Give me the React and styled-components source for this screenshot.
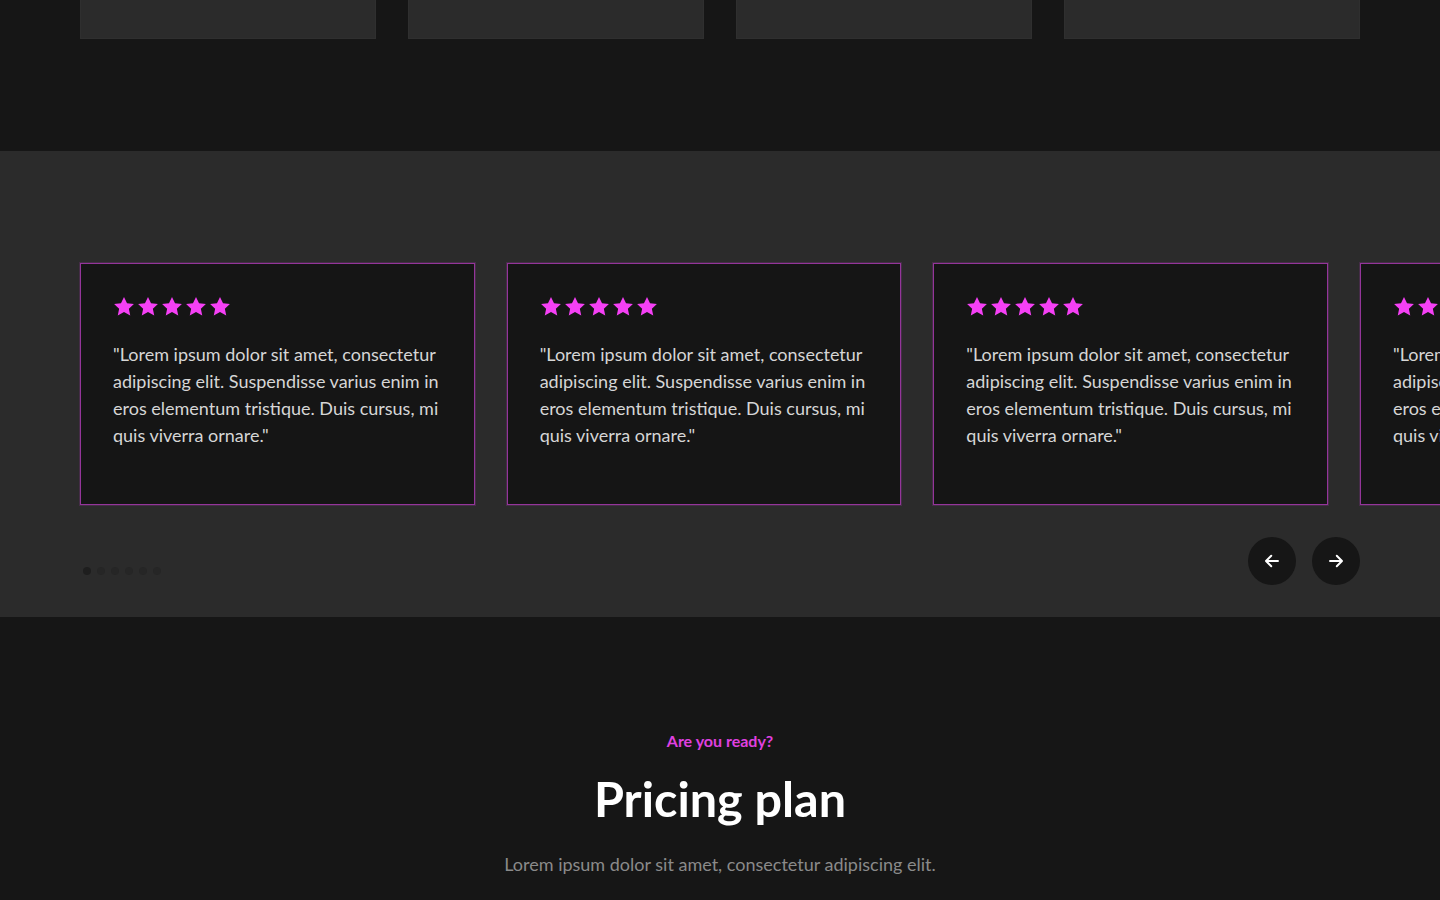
import React from 'react';
import styled, { createGlobalStyle } from 'styled-components';

const GlobalStyle = createGlobalStyle`
  html, body {
    margin: 0;
    padding: 0;
    background: #161616;
    font-family: Lato, "Open Sans", sans-serif;
    overflow-x: hidden;
  }
  * { box-sizing: border-box; }
`;

const TopSection = styled.section`
  background: #161616;
  padding: 0 80px 112px;
`;

const TopGrid = styled.div`
  display: grid;
  grid-template-columns: repeat(4, 1fr);
  gap: 32px;
`;

const TopCard = styled.div`
  height: 39px;
  background: #2b2b2b;
  border: 1px solid #2f2f2f;
  border-top: none;
`;

const ReviewSection = styled.section`
  background: #2b2b2b;
  padding: 112px 0 32px 80px;
  overflow: hidden;
`;

const Track = styled.div`
  display: flex;
  gap: 32px;
`;

const ReviewCard = styled.div`
  flex: 0 0 394.67px;
  height: 242px;
  background: #151515;
  border: 1px solid #94359a;
  box-shadow: 0 0 0 1px rgba(148, 53, 154, 0.25);
  padding: 32px;
`;

const Stars = styled.div`
  display: flex;
  gap: 2px;
  height: 22px;
  margin-bottom: 23px;
`;

const Quote = styled.p`
  margin: 0;
  font-size: 18px;
  line-height: 27px;
  color: #d6d6d6;
`;

const Controls = styled.div`
  display: flex;
  align-items: center;
  justify-content: space-between;
  margin-top: 32px;
  padding-right: 80px;
`;

const Dots = styled.div`
  display: flex;
  gap: 6px;
  padding-left: 3px;
  margin-top: 20px;
`;

const Dot = styled.span`
  width: 8px;
  height: 8px;
  border-radius: 50%;
  background: ${p => (p.$active ? '#1e1e1e' : '#262626')};
`;

const Arrows = styled.div`
  display: flex;
  gap: 16px;
`;

const ArrowButton = styled.button`
  width: 48px;
  height: 48px;
  border-radius: 50%;
  border: none;
  background: #161616;
  display: flex;
  align-items: center;
  justify-content: center;
  color: #fff;
  cursor: pointer;
  padding: 0;
`;

const PricingSection = styled.section`
  background: #161616;
  padding: 112px 80px 0;
  text-align: center;
`;

const Tagline = styled.div`
  color: #e040e0;
  font-size: 16px;
  font-weight: 700;
  line-height: 24px;
  margin-bottom: 16px;
`;

const Title = styled.h2`
  margin: 0 0 24px;
  color: #fff;
  font-size: 48.5px;
  line-height: 58px;
  font-weight: 700;
`;

const Subtitle = styled.p`
  margin: 0;
  color: #8a8a8a;
  font-size: 18px;
  line-height: 27px;
`;

const Star = () => (
  <svg width="22" height="22" viewBox="0 0 24 24">
    <path
      fill="#f540f5"
      d="M12 1l3.3 6.8 7.5.9-5.5 5.1 1.5 7.4L12 17.5l-6.8 3.7 1.5-7.4-5.5-5.1 7.5-.9z"
    />
  </svg>
);

const Arrow = ({ dir }) => (
  <svg width="18" height="18" viewBox="0 0 24 24" fill="none" stroke="currentColor"
    strokeWidth="2.6" strokeLinecap="round" strokeLinejoin="round"
    style={{ transform: dir === 'left' ? 'scaleX(-1)' : 'none' }}>
    <path d="M4 12h15M13 5l7 7-7 7" />
  </svg>
);

const quote =
  '"Lorem ipsum dolor sit amet, consectetur adipiscing elit. Suspendisse varius enim in eros elementum tristique. Duis cursus, mi quis viverra ornare."';

export default function App() {
  return (
    <>
      <GlobalStyle />
      <TopSection>
        <TopGrid>
          {[0, 1, 2, 3].map(i => <TopCard key={i} />)}
        </TopGrid>
      </TopSection>

      <ReviewSection>
        <Track>
          {[0, 1, 2, 3].map(i => (
            <ReviewCard key={i}>
              <Stars>
                {[0, 1, 2, 3, 4].map(s => <Star key={s} />)}
              </Stars>
              <Quote>{quote}</Quote>
            </ReviewCard>
          ))}
        </Track>
        <Controls>
          <Dots>
            {[0, 1, 2, 3, 4, 5].map(d => <Dot key={d} $active={d === 0} />)}
          </Dots>
          <Arrows>
            <ArrowButton aria-label="Previous"><Arrow dir="left" /></ArrowButton>
            <ArrowButton aria-label="Next"><Arrow dir="right" /></ArrowButton>
          </Arrows>
        </Controls>
      </ReviewSection>

      <PricingSection>
        <Tagline>Are you ready?</Tagline>
        <Title>Pricing plan</Title>
        <Subtitle>Lorem ipsum dolor sit amet, consectetur adipiscing elit.</Subtitle>
      </PricingSection>
    </>
  );
}
